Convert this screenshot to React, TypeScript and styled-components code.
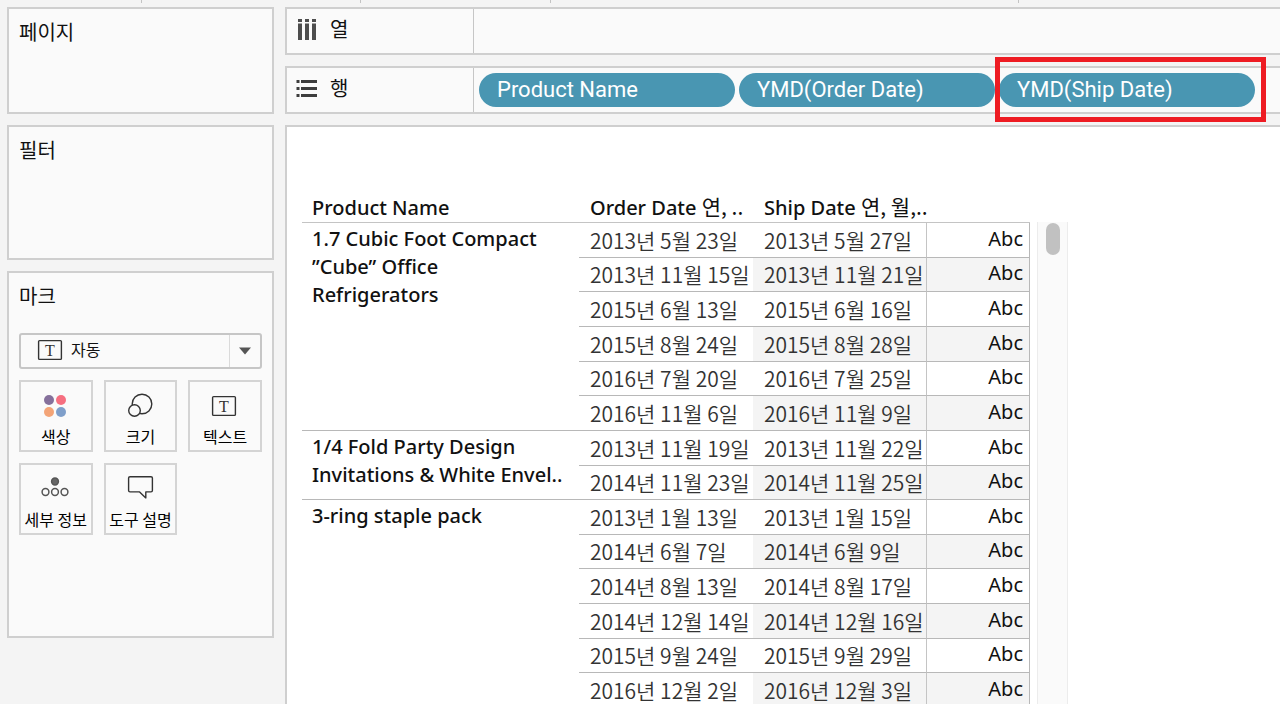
import React from 'react';
import styled, { createGlobalStyle } from 'styled-components';

const GlobalStyle = createGlobalStyle`
  *, *::before, *::after { box-sizing: border-box; }
  html, body, #root { height: 100%; }
  body {
    margin: 0;
    overflow: hidden;
    background: #f4f4f4;
    color: #111;
    font-family: 'Noto Sans', 'Noto Sans CJK KR', sans-serif;
  }
`;

const LINE = '#cfcfcf';
const KOREAN = "'Noto Sans CJK KR', sans-serif";

const Page = styled.div`
  display: flex;
  flex-direction: column;
  height: 100%;
  overflow: hidden;
`;

const TopStrip = styled.div`
  display: flex;
  flex: none;
  height: 7px;
`;

const Segment = styled.div<{ $width: number }>`
  width: ${(p) => p.$width}px;
  height: 3px;
  border-right: 1px solid #c4c4c4;
`;

const Workspace = styled.div`
  display: flex;
  flex: 1;
  gap: 11px;
  min-height: 0;
  padding-left: 7px;
`;

const Sidebar = styled.aside`
  display: flex;
  flex: none;
  flex-direction: column;
  gap: 11px;
  width: 267px;
`;

const Card = styled.section<{ $height: number }>`
  flex: none;
  height: ${(p) => p.$height}px;
  padding: 8px 10px;
  border: 2px solid ${LINE};
  background: #fafafa;
`;

const CardTitle = styled.h2`
  margin: 0;
  font: 400 20px/30px ${KOREAN};
`;

const SelectBox = styled.label`
  position: relative;
  display: block;
  height: 36px;
  margin-top: 22px;
`;

const MarkSelect = styled.select`
  appearance: none;
  width: 100%;
  height: 100%;
  padding: 0 40px 4px 50px;
  border: 2px solid #c6c6c6;
  border-radius: 3px;
  background: #fafafa;
  color: #111;
  font: 400 16px/24px ${KOREAN};
`;

const SelectIcon = styled.span`
  position: absolute;
  top: 6px;
  left: 18px;
  display: flex;
  pointer-events: none;
`;

const SelectArrow = styled.span`
  position: absolute;
  top: 2px;
  right: 2px;
  bottom: 2px;
  display: flex;
  align-items: center;
  justify-content: center;
  width: 31px;
  border-left: 1px solid #dadada;
  pointer-events: none;
`;

const MarkGrid = styled.div`
  display: grid;
  grid-template-columns: repeat(3, 1fr);
  gap: 11px;
  margin-top: 11px;
`;

const MarkButton = styled.button`
  display: flex;
  flex-direction: column;
  align-items: center;
  height: 72px;
  padding: 7px 0 0;
  border: 2px solid #d4d4d4;
  background: #fafafa;
  color: #000;
  font: 400 16px/24px ${KOREAN};
  white-space: nowrap;

  svg { flex: none; margin-bottom: 3px; }
`;

const Main = styled.main`
  display: flex;
  flex: 1;
  flex-direction: column;
  gap: 11px;
  min-width: 0;
`;

const Shelf = styled.div`
  display: flex;
  flex: none;
  height: 48px;
  border: 2px solid ${LINE};
  border-right: 0;
  background: #fafafa;
`;

const ShelfLabel = styled.div`
  display: flex;
  flex: none;
  align-items: center;
  gap: 12px;
  width: 187px;
  padding: 0 0 4px 9px;
  border-right: 1px solid #c6c6c6;
  font: 400 20px/30px ${KOREAN};
`;

const Pills = styled.div`
  display: flex;
  gap: 4px;
  min-width: 0;
  padding: 5px;
`;

const PillSlot = styled.div`
  position: relative;
  flex: none;
`;

const Pill = styled.button`
  display: block;
  width: 256px;
  height: 34px;
  padding: 0 18px;
  border: 0;
  border-radius: 17px;
  background: #4996b2;
  color: #fff;
  font: 400 22px/34px Roboto, sans-serif;
  text-align: left;
`;

const Highlight = styled.span`
  position: absolute;
  inset: -16px -11px -15px -4px;
  border: 5px solid #ee1c23;
  pointer-events: none;
`;

const Sheet = styled.section`
  display: flex;
  flex: 1;
  gap: 7px;
  min-height: 0;
  padding: 66px 0 0 15px;
  border: 2px solid ${LINE};
  border-right: 0;
  border-bottom: 0;
  background: #fff;
  overflow: hidden;
`;

const Table = styled.table`
  flex: none;
  table-layout: fixed;
  width: 728px;
  height: max-content;
  border-collapse: separate;
  border-spacing: 0;
`;

const HeadCell = styled.th`
  height: 30px;
  padding: 0 0 0 11px;
  border-bottom: 1px solid #c4c4c4;
  font-size: 20px;
  font-weight: 500;
  line-height: 28px;
  text-align: left;
  white-space: nowrap;

  &:first-child { padding-left: 10px; }
`;

const DateParts = styled.span`
  font: 400 21px/20px ${KOREAN};
`;

const NameCell = styled.th<{ $height: number }>`
  height: ${(p) => p.$height}px;
  padding: 2px 14px 0 10px;
  border-bottom: 1px solid #b8b8b8;
  font-size: 20px;
  font-weight: 500;
  line-height: 28px;
  text-align: left;
  vertical-align: top;
`;

const DateCell = styled.td<{ $shaded?: boolean; $edge?: boolean }>`
  padding: 0 0 0 11px;
  border-bottom: 1px solid #b8b8b8;
  border-right: ${(p) => (p.$edge ? '1px solid #c4c4c4' : '0')};
  background: ${(p) => (p.$shaded ? '#f4f4f4' : 'transparent')};
  color: #333;
  font: 350 21px/30px ${KOREAN};
  white-space: nowrap;
`;

const MarkCell = styled.td<{ $shaded?: boolean }>`
  padding: 0 6px 2px 0;
  border-right: 1px solid #b8b8b8;
  border-bottom: 1px solid #b8b8b8;
  background: ${(p) => (p.$shaded ? '#f4f4f4' : 'transparent')};
  font-size: 20px;
  line-height: 28px;
  text-align: right;
`;

const ScrollTrack = styled.div`
  align-self: stretch;
  flex: none;
  width: 31px;
  margin-top: 29px;
  padding: 1px 7px 0 8px;
  border: solid #ececec;
  border-width: 0 1px;
  background: #fafafa;
`;

const ScrollThumb = styled.div`
  height: 32px;
  border-radius: 7px;
  background: #c1c1c1;
`;

const TextIcon = () => (
  <svg width="26" height="22" viewBox="0 0 26 22" aria-hidden="true">
    <rect x="1.6" y="1.6" width="22.8" height="18.8" rx="1" fill="none" stroke="#333" strokeWidth="1.4" />
    <text x="13" y="16.6" textAnchor="middle" fontFamily="Liberation Serif, serif" fontSize="16" fill="#333">T</text>
  </svg>
);

const ColorIcon = () => (
  <svg width="28" height="32" viewBox="0 0 28 32" aria-hidden="true">
    <circle cx="7" cy="11" r="5" fill="#85709b" />
    <circle cx="19" cy="11" r="5" fill="#f66f80" />
    <circle cx="7" cy="23" r="5" fill="#f3a477" />
    <circle cx="19" cy="23" r="5" fill="#7f9fca" />
  </svg>
);

const SizeIcon = () => (
  <svg width="28" height="32" viewBox="0 0 28 32" fill="#fafafa" stroke="#333" strokeWidth="1.4" aria-hidden="true">
    <circle cx="16" cy="15" r="9.8" />
    <circle cx="8.5" cy="21.5" r="5.8" />
  </svg>
);

const LabelIcon = () => (
  <svg width="28" height="32" viewBox="0 0 28 32" aria-hidden="true">
    <rect x="1.6" y="7.6" width="22.8" height="18.8" rx="1" fill="none" stroke="#333" strokeWidth="1.4" />
    <text x="13" y="22.6" textAnchor="middle" fontFamily="Liberation Serif, serif" fontSize="16" fill="#333">T</text>
  </svg>
);

const DetailIcon = () => (
  <svg width="32" height="32" viewBox="0 0 32 32" fill="none" stroke="#555" strokeWidth="1.5" aria-hidden="true">
    <circle cx="15" cy="9.500" r="3.4" fill="#666" />
    <circle cx="5.5" cy="20" r="3.4" />
    <circle cx="15" cy="20" r="3.4" />
    <circle cx="24.5" cy="20" r="3.4" />
  </svg>
);

const TooltipIcon = () => (
  <svg width="28" height="32" viewBox="0 0 28 32" fill="none" stroke="#333" strokeWidth="1.4" strokeLinejoin="round" aria-hidden="true">
    <path d="M4 4.700h21a1.400 1.400 0 0 1 1.400 1.400v12.400a1.400 1.400 0 0 1-1.400 1.400h-5.200v6l-6.200-6H4a1.400 1.400 0 0 1-1.400-1.400V6.100A1.400 1.400 0 0 1 4 4.700z" />
  </svg>
);

const ColumnsIcon = () => (
  <svg width="22" height="24" viewBox="0 0 22 24" fill="#4d4d4d" aria-hidden="true">
    {[2, 9, 16].map((x) => (
      <React.Fragment key={x}>
        <rect x={x} y="2" width="4" height="3" />
        <rect x={x} y="6.500" width="4" height="16.500" />
      </React.Fragment>
    ))}
  </svg>
);

const RowsIcon = () => (
  <svg width="22" height="24" viewBox="0 0 22 24" fill="#3d3d3d" aria-hidden="true">
    {[4, 11, 18].map((y) => (
      <React.Fragment key={y}>
        <rect x="0.500" y={y} width="3" height="3" />
        <rect x="5" y={y} width="16" height="3" />
      </React.Fragment>
    ))}
  </svg>
);

const marks = [
  { label: '색상', icon: <ColorIcon /> },
  { label: '크기', icon: <SizeIcon /> },
  { label: '텍스트', icon: <LabelIcon /> },
  { label: '세부 정보', icon: <DetailIcon /> },
  { label: '도구 설명', icon: <TooltipIcon /> },
];

const fields = [
  { name: 'Product Name' },
  { name: 'YMD(Order Date)' },
  { name: 'YMD(Ship Date)', highlighted: true },
];

const products = [
  {
    name: '1.7 Cubic Foot Compact ”Cube” Office Refrigerators',
    height: 208,
    dates: [
      ['2013년 5월 23일', '2013년 5월 27일'],
      ['2013년 11월 15일', '2013년 11월 21일'],
      ['2015년 6월 13일', '2015년 6월 16일'],
      ['2015년 8월 24일', '2015년 8월 28일'],
      ['2016년 7월 20일', '2016년 7월 25일'],
      ['2016년 11월 6일', '2016년 11월 9일'],
    ],
  },
  {
    name: '1/4 Fold Party Design Invitations & White Envel..',
    height: 69,
    dates: [
      ['2013년 11월 19일', '2013년 11월 22일'],
      ['2014년 11월 23일', '2014년 11월 25일'],
    ],
  },
  {
    name: '3-ring staple pack',
    height: 208,
    dates: [
      ['2013년 1월 13일', '2013년 1월 15일'],
      ['2014년 6월 7일', '2014년 6월 9일'],
      ['2014년 8월 13일', '2014년 8월 17일'],
      ['2014년 12월 14일', '2014년 12월 16일'],
      ['2015년 9월 24일', '2015년 9월 29일'],
      ['2016년 12월 2일', '2016년 12월 3일'],
    ],
  },
];

export default function App() {
  return (
    <>
      <GlobalStyle />
      <Page>
        <TopStrip>
          <Segment $width={142} />
          <Segment $width={219} />
          <Segment $width={190} />
          <Segment $width={468} />
        </TopStrip>
        <Workspace>
          <Sidebar>
            <Card $height={107}>
              <CardTitle>페이지</CardTitle>
            </Card>
            <Card $height={135}>
              <CardTitle>필터</CardTitle>
            </Card>
            <Card $height={367}>
              <CardTitle>마크</CardTitle>
              <SelectBox>
                <MarkSelect aria-label="마크" defaultValue="auto">
                  <option value="auto">자동</option>
                </MarkSelect>
                <SelectIcon>
                  <TextIcon />
                </SelectIcon>
                <SelectArrow>
                  <svg width="12" height="8" viewBox="0 0 12 8" aria-hidden="true">
                    <path d="M0 0.500h12L6 7.500z" fill="#555" />
                  </svg>
                </SelectArrow>
              </SelectBox>
              <MarkGrid>
                {marks.map((m) => (
                  <MarkButton key={m.label} type="button">
                    {m.icon}
                    {m.label}
                  </MarkButton>
                ))}
              </MarkGrid>
            </Card>
          </Sidebar>
          <Main>
            <Shelf>
              <ShelfLabel>
                <ColumnsIcon />열
              </ShelfLabel>
            </Shelf>
            <Shelf>
              <ShelfLabel>
                <RowsIcon />행
              </ShelfLabel>
              <Pills>
                {fields.map((f) => (
                  <PillSlot key={f.name}>
                    <Pill type="button">{f.name}</Pill>
                    {f.highlighted && <Highlight />}
                  </PillSlot>
                ))}
              </Pills>
            </Shelf>
            <Sheet>
              <Table>
                <colgroup>
                  <col width="277" />
                  <col width="174" />
                  <col width="174" />
                  <col width="103" />
                </colgroup>
                <thead>
                  <tr>
                    <HeadCell scope="col">Product Name</HeadCell>
                    <HeadCell scope="col">Order Date <DateParts>연, ..</DateParts></HeadCell>
                    <HeadCell scope="col">Ship Date <DateParts>연, 월,..</DateParts></HeadCell>
                    <HeadCell as="td" />
                  </tr>
                </thead>
                {products.map((p) => (
                  <tbody key={p.name}>
                    {p.dates.map(([order, ship], i) => (
                      <tr key={order}>
                        {i === 0 && (
                          <NameCell scope="rowgroup" rowSpan={p.dates.length} $height={p.height}>
                            {p.name}
                          </NameCell>
                        )}
                        <DateCell>{order}</DateCell>
                        <DateCell $edge $shaded={i % 2 === 1}>{ship}</DateCell>
                        <MarkCell $shaded={i % 2 === 1}>Abc</MarkCell>
                      </tr>
                    ))}
                  </tbody>
                ))}
              </Table>
              <ScrollTrack>
                <ScrollThumb />
              </ScrollTrack>
            </Sheet>
          </Main>
        </Workspace>
      </Page>
    </>
  );
}
